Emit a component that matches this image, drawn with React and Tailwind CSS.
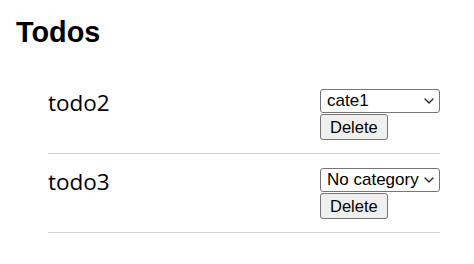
import React from "react";

function Chevron() {
  return (
    <svg className="pointer-events-none absolute right-[6px] top-[10px]" width="10" height="6" viewBox="0 0 10 6" fill="none">
      <path d="M1 1l4 4 4-4" stroke="#222" strokeWidth="1.3" strokeLinecap="round" strokeLinejoin="round" />
    </svg>
  );
}

function Row({ name, cat }) {
  return (
    <li className="flex items-start justify-between pt-[13px] pb-[13px] border-b border-[#d3d3d3]">
      <span className="text-[22.5px] leading-[30px] text-black" style={{ fontFamily: '"Open Sans", "Noto Sans", sans-serif' }}>{name}</span>
      <div className="flex flex-col items-start gap-[1px] w-[120px]">
        <div className="relative w-[120px]">
          <select
            defaultValue={cat}
            className="appearance-none w-[120px] h-[24px] pl-[6px] pr-[18px] border border-[#767676] rounded-[3px] bg-white text-[17px] leading-[20px] text-black"
            style={{ fontFamily: '"Liberation Sans", Arial, sans-serif' }}
          >
            <option value="No category">No category</option>
            <option value="cate1">cate1</option>
          </select>
          <Chevron />
        </div>
        <button
          className="h-[26px] px-[9px] border border-[#767676] rounded-[3px] bg-[#efefef] text-[16.5px] leading-[20px] text-black"
          style={{ fontFamily: '"Liberation Sans", Arial, sans-serif' }}
        >
          Delete
        </button>
      </div>
    </li>
  );
}

export default function App() {
  return (
    <div className="w-[474px] h-[264px] bg-white pl-4 pt-4 overflow-hidden">
      <h1 className="text-[28.8px] font-bold leading-[33px] text-black" style={{ fontFamily: '"Liberation Sans", Arial, sans-serif' }}>
        Todos
      </h1>
      <ul className="ml-8 mt-[26px] w-[392px]">
        <Row name="todo2" cat="cate1" />
        <Row name="todo3" cat="No category" />
      </ul>
    </div>
  );
}
